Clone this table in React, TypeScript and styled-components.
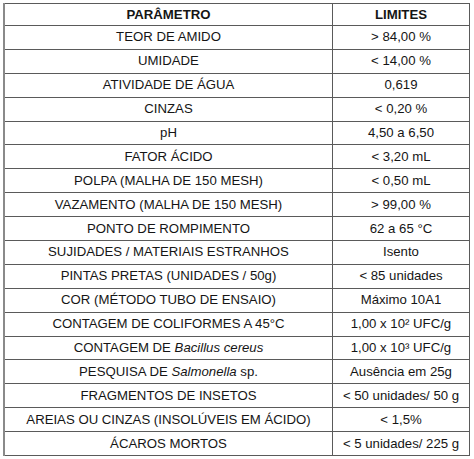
import styled, { createGlobalStyle } from 'styled-components';

const GlobalStyle = createGlobalStyle`
  html, body {
    margin: 0;
    padding: 0;
    background: #ffffff;
  }
`;

type Row = {
  param: React.ReactNode;
  limit: string;
};

const rows: Row[] = [
  { param: 'TEOR DE AMIDO', limit: '> 84,00 %' },
  { param: 'UMIDADE', limit: '< 14,00 %' },
  { param: 'ATIVIDADE DE ÁGUA', limit: '0,619' },
  { param: 'CINZAS', limit: '< 0,20 %' },
  { param: 'pH', limit: '4,50 a 6,50' },
  { param: 'FATOR ÁCIDO', limit: '< 3,20 mL' },
  { param: 'POLPA (MALHA DE 150 MESH)', limit: '< 0,50 mL' },
  { param: 'VAZAMENTO (MALHA DE 150 MESH)', limit: '> 99,00 %' },
  { param: 'PONTO DE ROMPIMENTO', limit: '62 a 65 °C' },
  { param: 'SUJIDADES / MATERIAIS ESTRANHOS', limit: 'Isento' },
  { param: 'PINTAS PRETAS (UNIDADES / 50g)', limit: '< 85 unidades' },
  { param: 'COR (MÉTODO TUBO DE ENSAIO)', limit: 'Máximo 10A1' },
  { param: 'CONTAGEM DE COLIFORMES A 45°C', limit: '1,00 x 10² UFC/g' },
  {
    param: (
      <>
        CONTAGEM DE <i>Bacillus cereus</i>
      </>
    ),
    limit: '1,00 x 10³ UFC/g',
  },
  {
    param: (
      <>
        PESQUISA DE <i>Salmonella</i> sp.
      </>
    ),
    limit: 'Ausência em 25g',
  },
  { param: 'FRAGMENTOS DE INSETOS', limit: '< 50 unidades/ 50 g' },
  { param: 'AREIAS OU CINZAS (INSOLÚVEIS EM ÁCIDO)', limit: '< 1,5%' },
  { param: 'ÁCAROS MORTOS', limit: '< 5 unidades/ 225 g' },
];

const App = () => {
  return (
    <>
      <GlobalStyle />
      <Page>
        <Table>
          <thead>
            <HeadRow>
              <HeadCell $wide>PARÂMETRO</HeadCell>
              <HeadCell>LIMITES</HeadCell>
            </HeadRow>
          </thead>
          <tbody>
            {rows.map((row, i) => (
              <BodyRow key={i}>
                <Cell $wide>{row.param}</Cell>
                <Cell>{row.limit}</Cell>
              </BodyRow>
            ))}
          </tbody>
        </Table>
      </Page>
    </>
  );
};

export default App;

const Page = styled.div`
  padding: 3px 4px 2px 3px;
  font-family: 'Liberation Sans', Arial, sans-serif;
  color: #151515;
`;

const Table = styled.table`
  width: 467px;
  border-collapse: collapse;
  border: 1px solid #5a5a5a;
  border-left: 2px solid #8a8a8a;
`;

const HeadRow = styled.tr`
  height: 22px;
`;

const BodyRow = styled.tr`
  height: 23.9px;
`;

const HeadCell = styled.th<{ $wide?: boolean }>`
  width: ${({ $wide }) => ($wide ? '319px' : 'auto')};
  padding: 0 4px;
  border: 1px solid #5a5a5a;
  font-size: 13.2px;
  font-weight: 700;
  text-align: center;
  vertical-align: middle;
  line-height: 16px;
`;

const Cell = styled.td<{ $wide?: boolean }>`
  width: ${({ $wide }) => ($wide ? '319px' : 'auto')};
  padding: 0 4px;
  border: 1px solid #5a5a5a;
  font-size: 13.2px;
  text-align: center;
  vertical-align: middle;
  line-height: 16px;
  white-space: nowrap;

  i {
    font-style: italic;
  }
`;
